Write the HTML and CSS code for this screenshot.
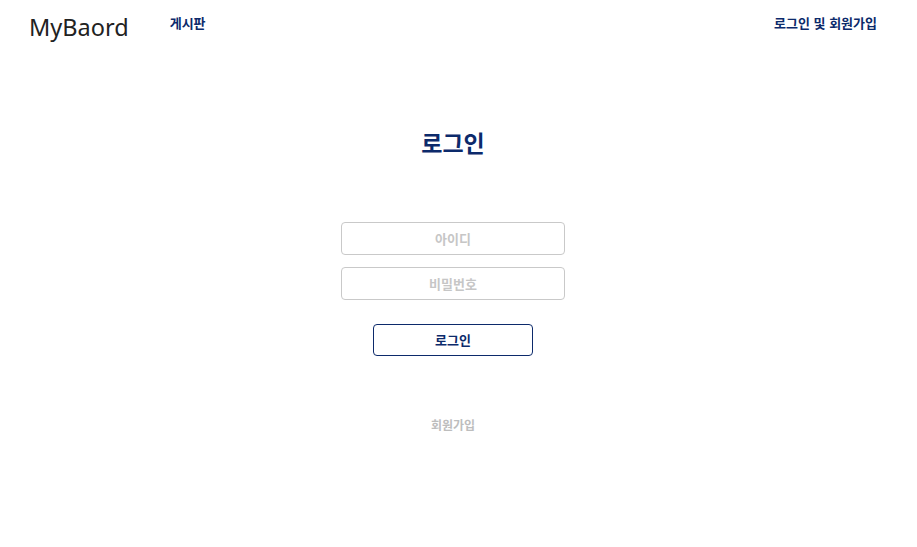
FILE: index.html
```html
<!DOCTYPE html>
<html lang="ko">
<head>
<meta charset="utf-8">
<title>MyBaord</title>
<link rel="stylesheet" href="styles.css">
</head>
<body>
<div class="page">
  <header class="header">
    <div class="header-left">
      <a class="logo" href="#">MyBaord</a>
      <a class="nav-link" href="#">게시판</a>
    </div>
    <a class="nav-link" href="#">로그인 및 회원가입</a>
  </header>
  <main class="main">
    <h1 class="title">로그인</h1>
    <form class="form">
      <input class="field" type="text" placeholder="아이디">
      <input class="field" type="password" placeholder="비밀번호">
      <button class="btn" type="button">로그인</button>
    </form>
    <a class="signup" href="#">회원가입</a>
  </main>
</div>
</body>
</html>
```
FILE: styles.css
```css
* { box-sizing: border-box; }
html, body { margin: 0; padding: 0; background: #fff; }
body {
  font-family: "Noto Sans CJK KR", sans-serif;
  color: #222;
}
a { text-decoration: none; }
.page { width: 906px; }
.header {
  display: flex;
  justify-content: space-between;
  align-items: center;
  height: 50px;
  padding: 0 29px 0 29px;
}
.header-left {
  display: flex;
  align-items: center;
  gap: 41px;
}
.logo {
  font-family: "Noto Sans", sans-serif;
  font-size: 23.5px;
  font-weight: 400;
  color: #222;
  line-height: 1;
  margin-top: 6px;
}
.nav-link {
  font-family: "Noto Sans CJK KR", sans-serif;
  font-weight: 700;
  font-size: 13px;
  color: #0c2a6b;
  margin-top: -5px;
}
.main {
  display: flex;
  flex-direction: column;
  align-items: center;
}
.title {
  margin: 75px 0 0;
  font-family: "Noto Sans CJK KR", sans-serif;
  font-size: 23px;
  font-weight: 700;
  color: #0c2a6b;
  line-height: 34px;
}
.form {
  display: flex;
  flex-direction: column;
  align-items: center;
  gap: 12px;
  margin-top: 63px;
}
.field {
  width: 224px;
  height: 33px;
  border: 1px solid #c9c9c9;
  border-radius: 4px;
  text-align: center;
  font-family: "Noto Sans CJK KR", sans-serif;
  font-weight: 700;
  font-size: 13px;
  outline: none;
}
.field::placeholder { color: #c6c6c6; }
.btn {
  margin-top: 12px;
  width: 160px;
  height: 32px;
  padding: 0 0 2px;
  border: 1px solid #0c2a6b;
  border-radius: 4px;
  background: #fff;
  font-family: "Noto Sans CJK KR", sans-serif;
  font-weight: 700;
  font-size: 13px;
  color: #0c2a6b;
}
.signup {
  margin-top: 60px;
  font-family: "Noto Sans CJK KR", sans-serif;
  font-weight: 700;
  font-size: 12px;
  color: #bdbdbd;
}
```
